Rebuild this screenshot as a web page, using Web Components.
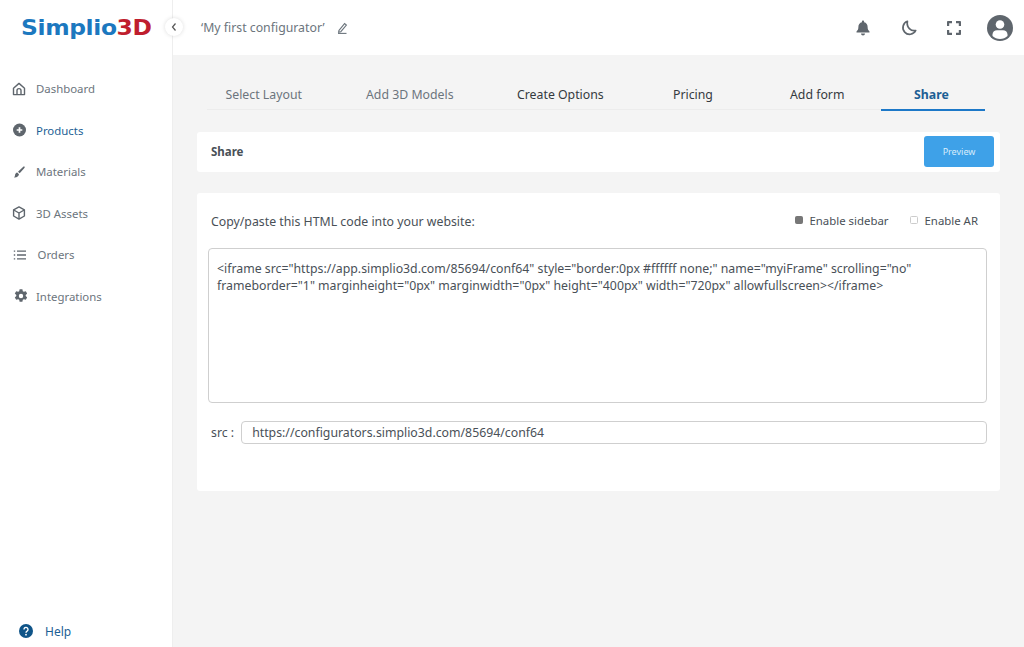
<!DOCTYPE html>
<html lang="en">
<head>
<meta charset="utf-8">
<title>Simplio3D</title>
<style>
  html, body { margin: 0; height: 100%; }
  body { font-family: "Noto Sans", "Open Sans", sans-serif; background: #f4f4f4; overflow: hidden; }
</style>
</head>
<body>
<app-shell>
  <app-sidebar slot="side">
    <side-item icon="home">Dashboard</side-item>
    <side-item icon="plus" active>Products</side-item>
    <side-item icon="brush">Materials</side-item>
    <side-item icon="box">3D Assets</side-item>
    <side-item icon="list" style="--text-shift:1.5px">Orders</side-item>
    <side-item icon="gear">Integrations</side-item>
  </app-sidebar>
  <app-header slot="head" title-text="‘My first configurator’"></app-header>
  <step-tabs>
    <step-tab style="--w:138px;--pad:18.5px">Select Layout</step-tab>
    <step-tab style="--w:145px;--pad:21px">Add 3D Models</step-tab>
    <step-tab style="--w:150px;--pad:27px;--color:#343a40">Create Options</step-tab>
    <step-tab style="--w:130px;--pad:33px;--color:#343a40">Pricing</step-tab>
    <step-tab style="--w:111px;--pad:20px;--color:#343a40">Add form</step-tab>
    <step-tab style="--w:104px;--pad:33px" active>Share</step-tab>
  </step-tabs>
  <title-card heading="Share">
    <preview-button>Preview</preview-button>
  </title-card>
  <share-card
    code='&lt;iframe src="https://app.simplio3d.com/85694/conf64" style="border:0px #ffffff none;" name="myiFrame" scrolling="no" frameborder="1" marginheight="0px" marginwidth="0px" height="400px" width="720px" allowfullscreen&gt;&lt;/iframe&gt;'
    src-url="https://configurators.simplio3d.com/85694/conf64"></share-card>
</app-shell>

<script>
const ICONS = {
  home: `<path d="M2.500 7.200 8 2.400l5.500 4.800v6.400H2.500Z" fill="none" stroke="currentColor" stroke-width="1.400" stroke-linejoin="round"/><path d="M6 13.400V9.600a2 2 0 0 1 4 0v3.800" fill="none" stroke="currentColor" stroke-width="1.400"/>`,
  plus: `<circle cx="8.500" cy="8" r="6.500" fill="currentColor"/><path d="M5.700 8h5.600M8.500 5.200v5.600" stroke="#fff" stroke-width="1.700"/>`,
  brush: `<path d="M13.400 2.600c.5.400.4 1 0 1.500L8.700 9.300 7 7.700l5-4.800c.4-.4 1-.6 1.400-.3Z" fill="currentColor"/><path d="M6.200 8.600 8 10.300c-.3 2-2 3.300-5 3.100.7-.6.9-1.200 1-2 .1-1.300 1-2.600 2.200-2.800Z" fill="currentColor"/>`,
  box: `<path d="M8 1.900 13.400 4.800V11L8 14.100 2.600 11V4.800Z" fill="none" stroke="currentColor" stroke-width="1.400" stroke-linejoin="round"/><path d="M2.800 5 8 8l5.200-3M8 8v6" fill="none" stroke="currentColor" stroke-width="1.400"/>`,
  list: `<path d="M6 4.200h9M6 8h9M6 11.800h9" stroke="currentColor" stroke-width="1.300"/><path d="M2.800 4.200h1.400M2.800 8h1.400M2.800 11.800h1.400" stroke="currentColor" stroke-width="1.300"/>`,
  gear: `<path transform="translate(2 0)" fill-rule="evenodd" fill="currentColor" d="M6.600 1.300h2.800l.4 1.900 1.100.6 1.900-.6 1.400 2.400-1.500 1.300v1.200l1.500 1.300-1.400 2.400-1.900-.6-1.100.6-.4 1.900H6.600l-.4-1.900-1.100-.6-1.900.6-1.400-2.400 1.500-1.300V6.900L1.800 5.600l1.400-2.400 1.900.6 1.100-.6ZM8 5.800a2.200 2.200 0 1 0 0 4.400 2.200 2.200 0 0 0 0-4.400Z"/>`
};

class AppShell extends HTMLElement {
  constructor() {
    super();
    this.attachShadow({ mode: "open" });
    this.shadowRoot.innerHTML = `
      <style>
        :host { display: grid; grid-template-columns: 173px 1fr; grid-template-rows: 55px 1fr; height: 647px; }
        .side { grid-row: 1 / 3; display: flex; }
        main { padding: 25px 24px 0 24px; display: flex; flex-direction: column; }
      </style>
      <div class="side"><slot name="side"></slot></div>
      <slot name="head"></slot>
      <main><slot></slot></main>
    `;
  }
}

class AppSidebar extends HTMLElement {
  constructor() {
    super();
    this.attachShadow({ mode: "open" });
    this.shadowRoot.innerHTML = `
      <style>
        :host { display: flex; flex-direction: column; flex: 1; background: #fff; border-right: 1px solid #eeeeee; position: relative; }
        .logo { height: 55px; display: flex; align-items: center; padding-left: 21px; font: 700 21.5px/1 "DejaVu Sans", sans-serif; letter-spacing: -.35px; color: #1c78bf; }
        .logo span { transform: scaleX(1.09); transform-origin: left center; }
        .logo b { color: #bf1e2e; font-weight: 700; }
        nav { display: flex; flex-direction: column; padding-top: 13px; flex: 1; }
        .collapse { position: absolute; left: 165px; top: 18px; width: 18px; height: 18px; border-radius: 50%; background: #fff; box-shadow: 0 0 4px rgba(0,0,0,.14); display: flex; align-items: center; justify-content: center; z-index: 2; }
        .help { display: flex; align-items: center; gap: 12px; padding: 0 0 5px 19px; height: 22px; color: #1d5f95; font-size: 12px; }
        .help svg { width: 14px; height: 14px; }
      </style>
      <div class="logo"><span>Simplio<b>3D</b></span></div>
      <div class="collapse"><svg width="8" height="10" viewBox="0 0 8 10"><path d="M5.500 1.500 2.500 5l3 3.500" fill="none" stroke="#555" stroke-width="1.200"/></svg></div>
      <nav><slot></slot></nav>
      <div class="help">
        <svg viewBox="0 0 14 14"><circle cx="7" cy="7" r="7" fill="#0f5488"/><path d="M5 5.400a2 2 0 1 1 3.200 1.600c-.8.600-1.200.9-1.200 1.700" fill="none" stroke="#fff" stroke-width="1.400"/><circle cx="7" cy="10.700" r=".9" fill="#fff"/></svg>
        <span>Help</span>
      </div>
    `;
  }
}

class SideItem extends HTMLElement {
  constructor() {
    super();
    this.attachShadow({ mode: "open" });
    const icon = ICONS[this.getAttribute("icon")] || "";
    const active = this.hasAttribute("active");
    this.shadowRoot.innerHTML = `
      <style>
        :host { display: flex; align-items: center; height: 41.5px; padding-left: 11px; font-size: 11.4px; color: ${active ? "#1d5f95" : "#6c757d"}; }
        svg { width: 16px; height: 16px; color: #5f666d; flex: none; }
        span { margin-left: calc(9px + var(--text-shift, 0px)); }
      </style>
      <svg viewBox="0 0 16 16">${icon}</svg><span><slot></slot></span>
    `;
  }
}

class AppHeader extends HTMLElement {
  constructor() {
    super();
    this.attachShadow({ mode: "open" });
    this.shadowRoot.innerHTML = `
      <style>
        :host { display: flex; align-items: center; background: #fff; padding-left: 28px; padding-right: 11px; font-size: 12.3px; color: #6c757d; }
        .title { display: flex; align-items: center; gap: 12px; flex: 1; }
        .title svg { width: 11px; height: 12px; }
        .tools { display: flex; align-items: center; }
        .tools svg { color: #5f666d; display: block; }
        .bell { margin-right: 31px; }
        .moon { margin-right: 30px; }
        .full { margin-right: 26px; }
      </style>
      <div class="title">
        <span>${this.getAttribute("title-text")}</span>
        <svg viewBox="0 0 11 12"><path d="M2 8.300 7.600 1.600l1.800 1.500L3.800 9.700l-2.200.6Z" fill="none" stroke="#6c757d" stroke-width="1.100"/><path d="M1 11.400h8.500" stroke="#6c757d" stroke-width="1.100"/></svg>
      </div>
      <div class="tools">
        <svg class="bell" width="14" height="16" viewBox="0 0 14 16"><path fill="currentColor" d="M7 .4c.7 0 1.100.4 1.100 1.100v.7c2.300.5 3.500 2.400 3.500 4.600 0 2.600.7 3.500 1.900 4.700v1H.5v-1C1.700 10.300 2.400 9.400 2.400 6.800c0-2.200 1.200-4.100 3.500-4.600v-.7C5.900.8 6.300.4 7 .4ZM5 13.500h4a2 2 0 0 1-4 0Z"/></svg>
        <svg class="moon" width="16" height="16" viewBox="0 0 16 16"><path d="M6.400 1.300a6.700 6.700 0 1 0 8.300 9.200C10 11.600 5.300 7.300 6.400 1.300Z" fill="none" stroke="currentColor" stroke-width="1.700" stroke-linejoin="round"/></svg>
        <svg class="full" width="14" height="14" viewBox="0 0 14 14"><path d="M1 5V1.800a.8.8 0 0 1 .8-.8H5M9 1h3.200a.8.800 0 0 1 .8.800V5M13 9v3.200a.8.800 0 0 1-.8.800H9M5 13H1.800a.8.800 0 0 1-.8-.800V9" fill="none" stroke="currentColor" stroke-width="2.400"/></svg>
        <svg width="26" height="26" viewBox="0 0 26 26"><circle cx="13" cy="13" r="13" fill="currentColor"/><circle cx="13" cy="9.500" r="4.300" fill="#fff"/><path d="M5.500 21v-1.500c0-2.800 2.200-4.300 4.500-4.300h6c2.300 0 4.500 1.500 4.500 4.300V21c-2 2-4.600 3-7.500 3s-5.500-1-7.500-3Z" fill="#fff"/></svg>
      </div>
    `;
  }
}

class StepTabs extends HTMLElement {
  constructor() {
    super();
    this.attachShadow({ mode: "open" });
    this.shadowRoot.innerHTML = `
      <style>
        :host { display: flex; height: 30px; margin-left: 10px; margin-right: 15px; border-bottom: 1px solid #ececec; box-sizing: border-box; }
      </style>
      <slot></slot>
    `;
  }
}

class StepTab extends HTMLElement {
  constructor() {
    super();
    this.attachShadow({ mode: "open" });
    const active = this.hasAttribute("active");
    this.shadowRoot.innerHTML = `
      <style>
        :host { display: block; box-sizing: border-box; width: var(--w); padding-left: var(--pad); height: 31px; line-height: 30px; font-size: 12.3px; white-space: nowrap;
          color: ${active ? "#1d5f95" : "var(--color, #6c757d)"}; font-weight: ${active ? 700 : 400}; border-bottom: 2px solid ${active ? "#1c78c8" : "transparent"}; }
      </style>
      <slot></slot>
    `;
  }
}

class TitleCard extends HTMLElement {
  constructor() {
    super();
    this.attachShadow({ mode: "open" });
    this.shadowRoot.innerHTML = `
      <style>
        :host { display: flex; align-items: center; justify-content: space-between; height: 40px; margin-top: 22px; background: #fff; border-radius: 3px; padding: 0 6px 2px 14px; box-sizing: border-box; font-size: 11.5px; font-weight: 700; color: #495057; }
      </style>
      <span>${this.getAttribute("heading")}</span>
      <slot></slot>
    `;
  }
}

class PreviewButton extends HTMLElement {
  constructor() {
    super();
    this.attachShadow({ mode: "open" });
    this.shadowRoot.innerHTML = `
      <style>
        :host { display: flex; align-items: center; justify-content: center; width: 70px; height: 31px; background: #3ea1e8; border-radius: 3px; color: #d8ecfb; font-size: 9px; font-weight: 400; }
      </style>
      <slot></slot>
    `;
  }
}

class CheckOption extends HTMLElement {
  constructor() {
    super();
    this.attachShadow({ mode: "open" });
    const on = this.hasAttribute("checked");
    this.shadowRoot.innerHTML = `
      <style>
        :host { display: flex; align-items: center; gap: 7px; font-size: 11.4px; color: #495057; }
        i { width: 8px; height: 8px; box-sizing: border-box; border-radius: 1.5px; border: 1px solid ${on ? "#777" : "#ccc"}; background: ${on ? "#777" : "#fff"}; }
      </style>
      <i></i><span><slot></slot></span>
    `;
  }
}

class ShareCard extends HTMLElement {
  constructor() {
    super();
    this.attachShadow({ mode: "open" });
    this.shadowRoot.innerHTML = `
      <style>
        :host { display: block; height: 298px; box-sizing: border-box; margin-top: 21px; background: #fff; border-radius: 3px; padding: 0 13px 0 11px; font-size: 12.3px; color: #495057; }
        .top { display: flex; align-items: center; justify-content: space-between; height: 55px; box-sizing: border-box; padding: 1px 9px 0 3px; }
        .opts { display: flex; gap: 21px; margin-top: -2px; }
        .code { height: 155px; box-sizing: border-box; border: 1px solid #cfcfcf; border-radius: 4px; padding: 11px 9px 11px 8px; line-height: 17px; }
        .src { display: flex; align-items: center; gap: 7px; margin-top: 18px; padding-left: 3px; }
        .field { flex: 1; height: 23px; box-sizing: border-box; border: 1px solid #cfcfcf; border-radius: 4px; padding-left: 10px; line-height: 21px; }
      </style>
      <div class="top">
        <span>Copy/paste this HTML code into your website:</span>
        <div class="opts">
          <check-option checked>Enable sidebar</check-option>
          <check-option>Enable AR</check-option>
        </div>
      </div>
      <div class="code"></div>
      <div class="src"><span>src :</span><div class="field"></div></div>
    `;
    this.shadowRoot.querySelector(".code").textContent = this.getAttribute("code");
    this.shadowRoot.querySelector(".field").textContent = this.getAttribute("src-url");
  }
}

customElements.define("app-shell", AppShell);
customElements.define("app-sidebar", AppSidebar);
customElements.define("side-item", SideItem);
customElements.define("app-header", AppHeader);
customElements.define("step-tabs", StepTabs);
customElements.define("step-tab", StepTab);
customElements.define("title-card", TitleCard);
customElements.define("preview-button", PreviewButton);
customElements.define("check-option", CheckOption);
customElements.define("share-card", ShareCard);
</script>
</body>
</html>
